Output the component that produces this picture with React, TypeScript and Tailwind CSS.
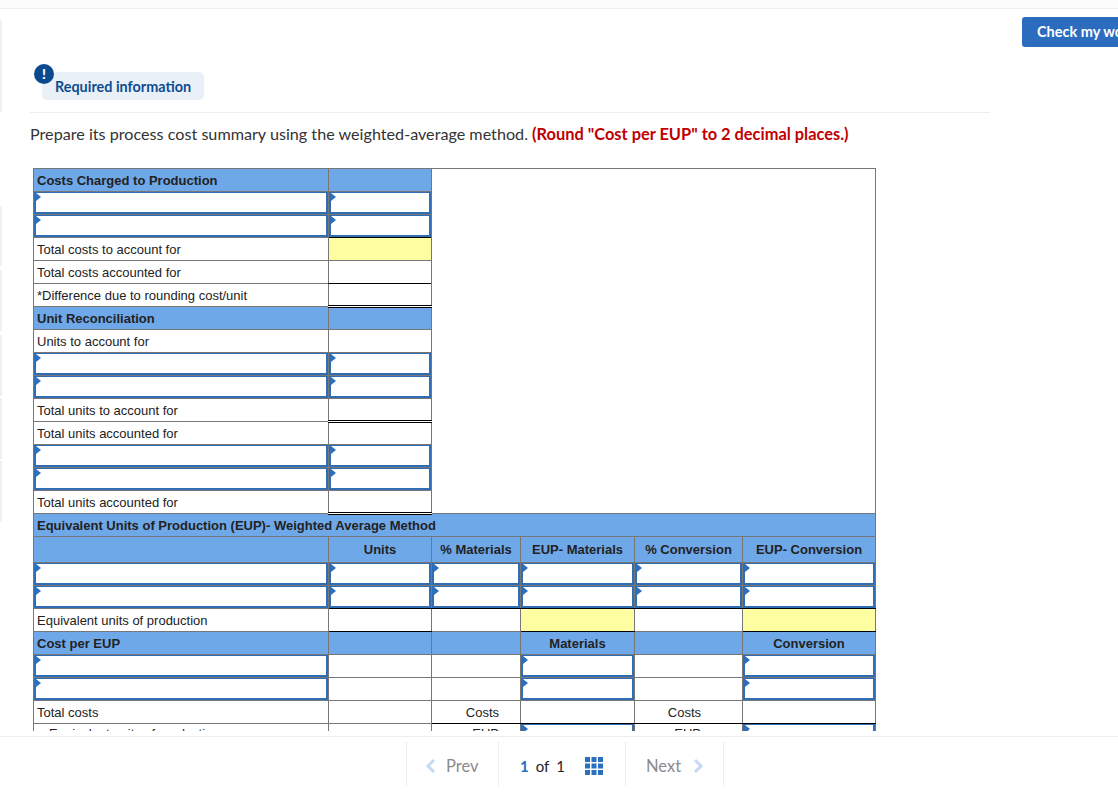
import React from "react";

const LABEL = "border border-[#777777] h-[23px] p-0 pl-[3px] text-left align-middle font-normal";
const HEAD = "border border-[#777777] h-[23px] p-0 px-[3px] bg-[#6fa8e8] font-bold";
const PLAIN = "border border-[#777777] h-[23px] p-0";

const Arrow = () => (
  <span className="absolute left-0 top-0 border-y-[4px] border-l-[5px] border-y-transparent border-l-[#2b6fc0]" />
);

const InputCell: React.FC<{ dark?: boolean }> = ({ dark }) => (
  <td className={`border border-[#777777] p-0 h-[23px] ${dark ? "border-b-black" : ""}`}>
    <div className="relative h-[22px] bg-white border-2 border-t-[1.5px] border-[#2f6db5]">
      <Arrow />
    </div>
  </td>
);

const LabelRow: React.FC<{ label: string; value?: string }> = ({ label, value }) => (
  <tr>
    <td className={LABEL}>{label}</td>
    <td className={`${PLAIN} ${value ?? ""}`} />
  </tr>
);

const InputRow: React.FC<{ dark?: boolean }> = ({ dark }) => (
  <tr>
    <InputCell />
    <InputCell dark={dark} />
  </tr>
);

const HeadRow: React.FC<{ label: string }> = ({ label }) => (
  <tr>
    <td className={HEAD}>{label}</td>
    <td className={HEAD} />
  </tr>
);

const CostTable = () => (
  <table className="border-collapse table-fixed w-[842px] text-[13px] leading-[15px] text-[#222] font-['Liberation_Sans',Arial,sans-serif]">
    <colgroup>
      <col className="w-[295px]" />
      <col className="w-[103px]" />
      <col className="w-[89px]" />
      <col className="w-[114px]" />
      <col className="w-[108px]" />
      <col className="w-[133px]" />
    </colgroup>
    <tbody>
      <tr>
        <td className={HEAD}>Costs Charged to Production</td>
        <td className={HEAD} />
        <td rowSpan={15} colSpan={4} className="border border-[#777777] p-0" />
      </tr>
      <InputRow />
      <InputRow dark />
      <LabelRow label="Total costs to account for" value="bg-[#fdfea2]" />
      <LabelRow label="Total costs accounted for" />
      <LabelRow label="*Difference due to rounding cost/unit" value="border-t-black border-b-[3px] border-b-black border-double" />
      <HeadRow label="Unit Reconciliation" />
      <LabelRow label="Units to account for" />
      <InputRow />
      <InputRow dark />
      <LabelRow label="Total units to account for" value="border-b-[3px] border-b-black border-double" />
      <LabelRow label="Total units accounted for" />
      <InputRow />
      <InputRow dark />
      <LabelRow label="Total units accounted for" value="border-b-[3px] border-b-black border-double" />
      <tr>
        <td colSpan={6} className={HEAD}>
          Equivalent Units of Production (EUP)- Weighted Average Method
        </td>
      </tr>
      <tr className="text-center">
        <td className={`${HEAD} !h-[26px]`} />
        <td className={`${HEAD} !h-[26px]`}>Units</td>
        <td className={`${HEAD} !h-[26px]`}>% Materials</td>
        <td className={`${HEAD} !h-[26px]`}>EUP- Materials</td>
        <td className={`${HEAD} !h-[26px]`}>% Conversion</td>
        <td className={`${HEAD} !h-[26px]`}>EUP- Conversion</td>
      </tr>
      {[0, 1].map((row) => (
        <tr key={row}>
          {[0, 1, 2, 3, 4, 5].map((col) => (
            <InputCell key={col} dark={row === 1 && col > 0} />
          ))}
        </tr>
      ))}
      <tr>
        <td className={LABEL}>Equivalent units of production</td>
        <td className={`${PLAIN} border-b-black`} />
        <td className={PLAIN} />
        <td className={`${PLAIN} bg-[#fdfea2] border-b-black`} />
        <td className={PLAIN} />
        <td className={`${PLAIN} bg-[#fdfea2] border-b-black`} />
      </tr>
      <tr className="text-center">
        <td className={`${HEAD} text-left`}>Cost per EUP</td>
        <td className={HEAD} />
        <td className={HEAD} />
        <td className={HEAD}>Materials</td>
        <td className={HEAD} />
        <td className={HEAD}>Conversion</td>
      </tr>
      {[0, 1].map((row) => (
        <tr key={row}>
          <InputCell />
          <td className={PLAIN} />
          <td className={PLAIN} />
          <InputCell />
          <td className={PLAIN} />
          <InputCell />
        </tr>
      ))}
      <tr>
        <td className={LABEL}>Total costs</td>
        <td className={PLAIN} />
        <td className={`${PLAIN} text-right pr-[21px] border-b-black`}>Costs</td>
        <td className={`${PLAIN} border-b-black`} />
        <td className={`${PLAIN} text-right pr-[41px] border-b-black`}>Costs</td>
        <td className={`${PLAIN} border-b-black`} />
      </tr>
      <tr>
        <td className={`${LABEL} !pl-[15px] pb-[3px]`}>Equivalent units of production</td>
        <td className={PLAIN} />
        <td className={`${PLAIN} text-right pr-[21px] pb-[3px]`}>EUP</td>
        <InputCell />
        <td className={`${PLAIN} text-right pr-[41px] pb-[3px]`}>EUP</td>
        <InputCell />
      </tr>
    </tbody>
  </table>
);

const Pager = () => (
  <div className="flex justify-center h-[59px] border-t border-[#eeeeee] pt-[5px] pl-[12px] text-[16.5px] font-['Lato',sans-serif]">
    <div className="flex h-[44px] items-center border-x border-[#eeeeee]">
      <div className="flex items-center gap-[10px] w-[91px] pl-[18px] pt-[4px] text-[#8b8b8b]">
        <svg width="11" height="16" viewBox="0 0 11 16" fill="none" stroke="#c5d9f0" strokeWidth="3">
          <path d="M9 2 3 8l6 6" />
        </svg>
        Prev
      </div>
      <div className="flex items-center w-[128px] h-full border-x border-[#eeeeee] pl-[21px] pt-[4px] text-[#222] text-[15px]">
        <span className="font-bold text-[#2b6fc0]">1</span>
        <span className="ml-[7px]">of</span>
        <span className="ml-[7px]">1</span>
        <svg className="ml-[20px]" width="18" height="18" viewBox="0 0 18 18" fill="#2b6fc0">
          <rect x="0" y="0" width="5" height="5" />
          <rect x="6.5" y="0" width="5" height="5" />
          <rect x="13" y="0" width="5" height="5" />
          <rect x="0" y="6.5" width="5" height="5" />
          <rect x="6.5" y="6.5" width="5" height="5" />
          <rect x="13" y="6.5" width="5" height="5" />
          <rect x="0" y="13" width="5" height="5" />
          <rect x="6.5" y="13" width="5" height="5" />
          <rect x="13" y="13" width="5" height="5" />
        </svg>
      </div>
      <div className="flex items-center gap-[12px] w-[97px] pl-[20px] pt-[4px] text-[#8b8b8b]">
        Next
        <svg width="11" height="16" viewBox="0 0 11 16" fill="none" stroke="#c5d9f0" strokeWidth="3">
          <path d="M2 2l6 6-6 6" />
        </svg>
      </div>
    </div>
  </div>
);

const Sliver = () => (
  <aside className="w-[2px] shrink-0 flex flex-col pt-[11px]">
    <div className="h-[92px] border-r-2 border-y border-[#f0f0f0] rounded-r-[3px]" />
    <div className="mt-[94px] h-[60px] border-r-2 border-t border-[#f0f0f0] rounded-tr-[3px]" />
    <div className="mt-[4px] h-[61px] border-r-2 border-t border-[#f0f0f0]" />
    <div className="mt-[4px] h-[61px] border-r-2 border-t border-[#f0f0f0]" />
    <div className="mt-[2px] h-[61px] border-r-2 border-t border-[#f0f0f0]" />
    <div className="mt-[2px] h-[61px] border-r-2 border-y border-[#f0f0f0] rounded-br-[3px]" />
  </aside>
);

export default function App() {
  return (
    <div className="w-[1118px] h-[795px] overflow-hidden bg-white flex flex-col font-['Lato',sans-serif]">
      <div className="h-[9px] shrink-0 bg-[#fcfcfc] border-b border-[#eeeeee]" />

      <div className="h-[722px] shrink-0 overflow-hidden flex">
        <Sliver />
        <div className="w-[1116px] shrink-0 flex flex-col">
          <div className="shrink-0 w-[140px] ml-[1020px] mt-[8px] h-[30px] bg-[#2b6cbf] rounded-[3px] text-white font-bold text-[14.5px] leading-[29px] pl-[15px] whitespace-nowrap">
            Check my work
          </div>

          <div className="ml-[28px] w-[960px] mt-[25px] h-[41px] border-b border-[#eeeeee] relative shrink-0">
            <span className="absolute left-[4px] -top-[8px] w-[20px] h-[20px] rounded-full bg-[#0b4a8f] text-white text-[14px] font-black leading-[20px] text-center">
              !
            </span>
            <div className="ml-[12px] inline-block h-[28px] px-[13px] bg-[#e9f0f8] rounded-[5px] text-[#0f4c8f] font-bold text-[14.4px] leading-[29px]">
              Required information
            </div>
          </div>

          <p className="ml-[28px] mt-[10px] text-[16.16px] leading-[22px] text-[#333] shrink-0 whitespace-nowrap">
            Prepare its process cost summary using the weighted-average method.{" "}
            <b className="text-[#c00000] text-[16.4px]">(Round "Cost per EUP" to 2 decimal places.)</b>
          </p>

          <div className="ml-[31px] mt-[23px]">
            <CostTable />
          </div>
        </div>
      </div>

      <div className="h-[5px] shrink-0" />
      <Pager />
    </div>
  );
}
